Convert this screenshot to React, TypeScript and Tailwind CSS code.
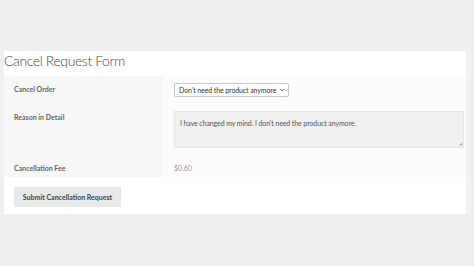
export default function App() {
  return (
    <div className="min-h-[266px] w-[474px] bg-[#efefef] pt-[51px] font-['Lato',sans-serif]">
      <div className="ml-[3px] w-[467px] bg-white pb-[7px] border-l border-[#f2f2f2] border-r-[4px]">
        <h1 className="h-[25px] pt-[1px] text-[14px] leading-[17px] tracking-[-0.4px] font-light text-[#4a4a4a]">
          Cancel Request Form
        </h1>
        <div className="w-[462px] flex flex-col">
          <div className="flex h-[28px]">
            <div className="w-[159px] bg-[#f7f7f7] pl-[10px] pt-[8px] text-[7px] leading-[10px] font-bold text-[#666]">
              Cancel Order
            </div>
            <div className="flex-1 flex items-start bg-[#fcfcfc] pl-[11px] pt-[7px]">
              <div className="flex items-center gap-[3px] h-[14px] pl-[4px] pr-[3px] bg-white border border-[#c8c8c8] rounded-[2px] text-[7px] leading-[10px] tracking-[-0.1px] text-[#333]">
                Don&rsquo;t need the product anymore
                <svg width="6" height="4" viewBox="0 0 6 4">
                  <path d="M1 1 L3 3 L5 1" fill="none" stroke="#555" strokeWidth="0.8" />
                </svg>
              </div>
            </div>
          </div>
          <div className="flex h-[50px]">
            <div className="w-[159px] bg-[#f7f7f7] pl-[10px] pt-[8px] text-[7px] leading-[10px] font-bold text-[#666]">
              Reason in Detail
            </div>
            <div className="flex-1 bg-[#fcfcfc] pl-[11px] pt-[7px] pr-[2px]">
              <div className="relative h-[37px] bg-[#f0f0f0] border border-[#e6e6e6] pl-[5px] pt-[6px] text-[7px] leading-[10px] tracking-[-0.1px] text-[#555]">
                I have changed my mind. I don&rsquo;t need the product anymore.
                <span className="absolute right-[1px] bottom-[1px] text-[4px] leading-none text-[#aaa]">◢</span>
              </div>
            </div>
          </div>
          <div className="flex h-[23px]">
            <div className="w-[159px] bg-[#f7f7f7] pl-[10px] pt-[9px] text-[7px] leading-[10px] font-bold text-[#666]">
              Cancellation Fee
            </div>
            <div className="flex-1 bg-[#fcfcfc] pl-[11px] pt-[9px] text-[7px] leading-[10px] text-[#999]">$0.60</div>
          </div>
        </div>
        <div className="flex pl-[10px] pt-[10px]">
          <button className="h-[20px] w-[107px] bg-[#e8e8e8] text-[7px] leading-[10px] font-bold text-[#444]">
            Submit Cancellation Request
          </button>
        </div>
      </div>
    </div>
  );
}
